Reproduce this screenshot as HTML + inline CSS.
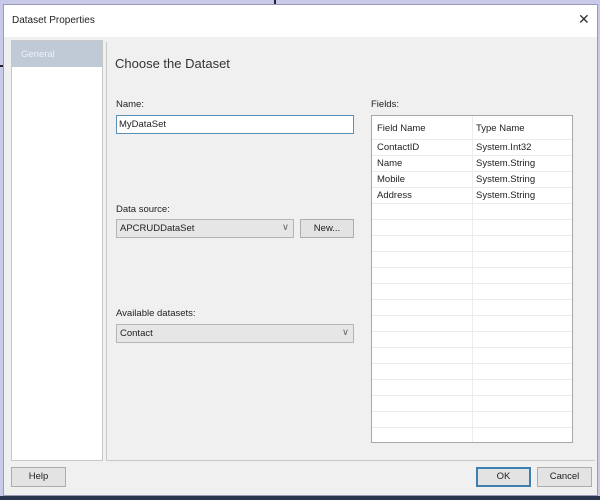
<!DOCTYPE html>
<html><head><style>
*{box-sizing:border-box;margin:0;padding:0}
body{width:600px;height:500px;background:#c9c9ea;position:relative;overflow:hidden;font-family:"Liberation Sans",sans-serif;font-size:9.5px;color:#222}
.a{position:absolute}
.dlg{left:3px;top:4px;width:595px;height:492px;background:#f0f0f0;border:1px solid #9a9ab8}
.tb{left:0;top:0;width:100%;height:32px;background:#fff}
.btn{background:#e3e3e3;border:1px solid #adadad;text-align:center;line-height:18px}
.row{position:absolute;left:0;width:100%;height:16px;border-bottom:1px solid #ececec;line-height:15px}
</style></head><body>
<div class="a" style="left:274px;top:0;width:2px;height:5px;background:#223"></div>
<div class="a" style="left:0;top:65px;width:4px;height:2px;background:#223"></div>
<div class="a" style="left:0;top:496px;width:600px;height:4px;background:#2a3550"></div>
<div class="a dlg">
 <div class="a tb"></div>
 <div class="a" style="left:8px;top:10px;font-size:10px">Dataset Properties</div>
 <div class="a" style="left:574px;top:6px;font-size:14px;color:#333">✕</div>
 <div class="a" style="left:7px;top:35px;width:92px;height:421px;background:#fff;border:1px solid #c8c8c8"></div>
 <div class="a" style="left:8px;top:36px;width:90px;height:26px;background:#bfcad6;color:#eef;padding:8px 0 0 9px">General</div>
 <div class="a" style="left:102px;top:37px;width:1px;height:418px;background:#c8c8c8"></div>
 <div class="a" style="left:102px;top:455px;width:489px;height:1px;background:#c8c8c8"></div>
 <div class="a" style="left:111px;top:51px;font-size:13px;color:#333">Choose the Dataset</div>
 <div class="a" style="left:112px;top:94px">Name:</div>
 <div class="a" style="left:112px;top:110px;width:238px;height:19px;background:#fff;border:1px solid #5a8fb8;padding:3px 2px">MyDataSet</div>
 <div class="a" style="left:112px;top:199px">Data source:</div>
 <div class="a" style="left:112px;top:214px;width:178px;height:19px;background:#e6e6e6;border:1px solid #b5b5b5;padding:3px 3px">APCRUDDataSet<span style="position:absolute;right:4px;top:2px;color:#666">∨</span></div>
 <div class="a btn" style="left:296px;top:214px;width:54px;height:19px">New...</div>
 <div class="a" style="left:112px;top:303px">Available datasets:</div>
 <div class="a" style="left:112px;top:319px;width:238px;height:19px;background:#e6e6e6;border:1px solid #b5b5b5;padding:3px 3px">Contact<span style="position:absolute;right:4px;top:2px;color:#666">∨</span></div>
 <div class="a" style="left:367px;top:94px">Fields:</div>
 <div class="a" style="left:367px;top:110px;width:202px;height:328px;background:#fff;border:1px solid #a8a8a8;overflow:hidden">
  <div class="a" style="left:100px;top:0;width:1px;height:100%;background:#ececec"></div>
  <div class="row" style="top:4px;height:20px;line-height:18px;padding-left:5px">Field Name<span style="position:absolute;left:104px">Type Name</span></div>
  <div class="row" style="top:24px;padding-left:5px">ContactID<span style="position:absolute;left:104px">System.Int32</span></div>
  <div class="row" style="top:40px;padding-left:5px">Name<span style="position:absolute;left:104px">System.String</span></div>
  <div class="row" style="top:56px;padding-left:5px">Mobile<span style="position:absolute;left:104px">System.String</span></div>
  <div class="row" style="top:72px;padding-left:5px">Address<span style="position:absolute;left:104px">System.String</span></div>
  <div class="row" style="top:88px"></div><div class="row" style="top:104px"></div><div class="row" style="top:120px"></div><div class="row" style="top:136px"></div><div class="row" style="top:152px"></div><div class="row" style="top:168px"></div><div class="row" style="top:184px"></div><div class="row" style="top:200px"></div><div class="row" style="top:216px"></div><div class="row" style="top:232px"></div><div class="row" style="top:248px"></div><div class="row" style="top:264px"></div><div class="row" style="top:280px"></div><div class="row" style="top:296px"></div><div class="row" style="top:312px"></div>
 </div>
 <div class="a btn" style="left:7px;top:462px;width:55px;height:20px">Help</div>
 <div class="a btn" style="left:472px;top:462px;width:55px;height:20px;border:2px solid #3c7fb1;line-height:16px">OK</div>
 <div class="a btn" style="left:533px;top:462px;width:55px;height:20px">Cancel</div>
</div>
</body></html>
